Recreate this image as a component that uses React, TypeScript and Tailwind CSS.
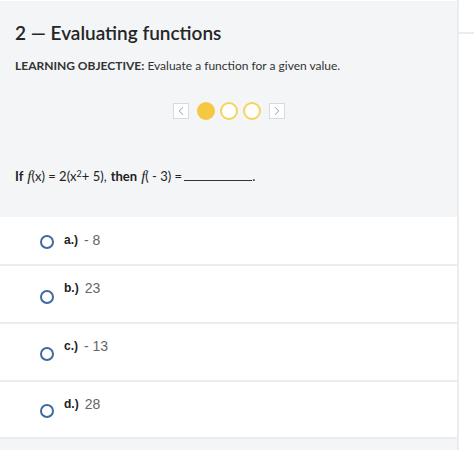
import { ChevronLeft, ChevronRight } from "lucide-react";

const options = [
  { label: "a.)", value: "- 8", pad: "pt-[15px]", dot: "mt-[3px]", h: "h-[49px]" },
  { label: "b.)", value: "23", pad: "pt-[14px]", dot: "mt-[10px]", h: "h-[58px]" },
  { label: "c.)", value: "- 13", pad: "pt-[14px]", dot: "mt-[9px]", h: "h-[58px]" },
  { label: "d.)", value: "28", pad: "pt-[14px]", dot: "mt-[8px]", h: "h-[57px]" },
];

export default function App() {
  return (
    <div className="flex h-[450px] w-[474px] overflow-hidden bg-white font-['Lato',sans-serif] text-[#222]">
      <main className="flex w-[459px] flex-col border-r-2 border-[#ececee]">
        <section className="h-[217px] border-t border-white bg-[#f4f5f7] px-[15px]">
          <h1 className="mt-[19px] text-[19px] leading-[26px] font-semibold text-[#262626]">
            2 — Evaluating functions
          </h1>
          <p className="mt-[12px] text-[12px] leading-[16px] text-[#333]">
            <span className="font-bold">LEARNING OBJECTIVE:</span> Evaluate a function for a given value.
          </p>

          <div className="mt-[28px] flex items-center justify-center gap-[5px]">
            <button className="mr-[3px] flex h-[16px] w-[16px] items-center justify-center border border-[#d6dae0] bg-white text-[#5d7fa8]">
              <ChevronLeft size={14} strokeWidth={1.3} />
            </button>
            <span className="h-[18px] w-[18px] rounded-full bg-[#f5c842]" />
            <span className="h-[18px] w-[18px] rounded-full border-2 border-[#f5d35c] bg-white" />
            <span className="h-[18px] w-[18px] rounded-full border-2 border-[#f5d35c] bg-white" />
            <button className="ml-[3px] flex h-[16px] w-[16px] items-center justify-center border border-[#d6dae0] bg-white text-[#5d7fa8]">
              <ChevronRight size={14} strokeWidth={1.3} />
            </button>
          </div>

          <p className="mt-[47px] flex items-baseline text-[13px] leading-[18px] text-[#222]">
            <span className="font-bold">If</span>
            <span className="ml-[4px] font-['Liberation_Serif',serif] text-[15px] italic">f</span>
            <span>(x) = 2(x</span>
            <sup className="text-[9px]">2</sup>
            <span>+ 5),</span>
            <span className="ml-[4px] font-bold">then</span>
            <span className="ml-[4px] font-['Liberation_Serif',serif] text-[15px] italic">f</span>
            <span>( - 3) =</span>
            <span className="ml-[2px] inline-block w-[68px] border-b border-[#333]" />
            <span>.</span>
          </p>
        </section>

        {options.map((o) => (
          <div
            key={o.label}
            className={`flex items-start border-b-2 border-[#ececee] pl-[40px] ${o.pad} ${o.h}`}
          >
            <span className={`h-[14px] w-[14px] rounded-full border-2 border-[#3d6b9e] ${o.dot}`} />
            <span className="ml-[10px] font-['Liberation_Sans',sans-serif] text-[12px] leading-[16px] font-bold text-[#222]">
              {o.label}
            </span>
            <span className="ml-[6px] font-['Liberation_Sans',sans-serif] text-[14px] leading-[16px] text-[#666]">
              {o.value}
            </span>
          </div>
        ))}
        <div className="flex-1 bg-[#f4f5f7]" />
      </main>
      <aside className="flex-1">
        <div className="mt-[32px] border-b-2 border-[#ececee]" />
      </aside>
    </div>
  );
}
